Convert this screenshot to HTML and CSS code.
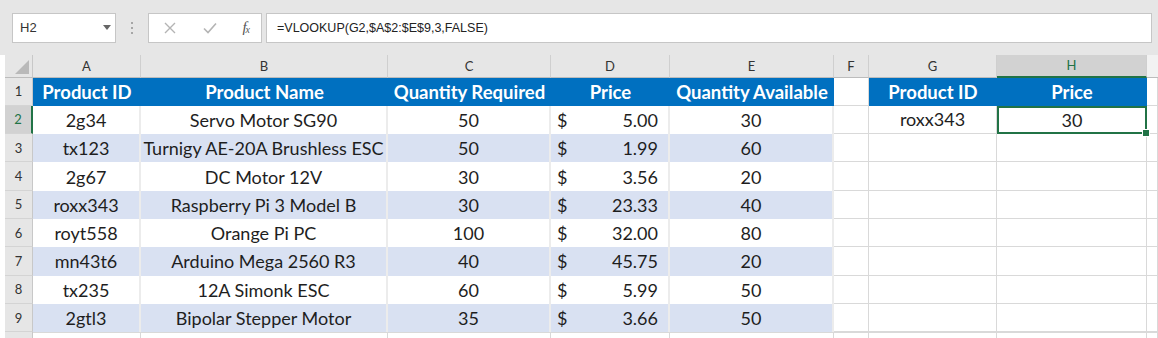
FILE: index.html
```html
<!DOCTYPE html>
<html lang="en">
<head>
  <meta charset="UTF-8">
  <meta name="viewport" content="width=device-width, initial-scale=1.0">
  <title>VLOOKUP Example</title>
  <link rel="stylesheet" href="styles.css">
</head>
<body>
  <div class="toolbar">
    <div class="name-box">
      <span>H2</span>
      <svg class="caret" width="8" height="5" viewBox="0 0 8 5"><path d="M0 0h8L4 5z" fill="#666"/></svg>
    </div>
    <div class="grip"><span></span><span></span><span></span></div>
    <div class="fx-box">
      <svg width="14" height="14" viewBox="0 0 14 14"><path d="M2 2l10 10M12 2L2 12" stroke="#b4b4b4" stroke-width="1.4" fill="none"/></svg>
      <svg width="16" height="14" viewBox="0 0 16 14"><path d="M2 7.5l4 4L14 2.5" stroke="#b4b4b4" stroke-width="1.6" fill="none"/></svg>
      <span class="fx"><i>f</i><sub>x</sub></span>
    </div>
    <div class="formula">=VLOOKUP(G2,$A$2:$E$9,3,FALSE)</div>
  </div>

  <div class="sheet">
    <!-- column letters -->
    <div class="row heads">
      <div class="corner"><span></span></div>
      <div class="ch">A</div>
      <div class="ch">B</div>
      <div class="ch">C</div>
      <div class="ch">D</div>
      <div class="ch">E</div>
      <div class="ch">F</div>
      <div class="ch">G</div>
      <div class="ch active">H</div>
      <div class="ch last"></div>
    </div>

    <div class="row">
      <div class="rh">1</div>
      <div class="c hd">Product ID</div>
      <div class="c hd">Product Name</div>
      <div class="c hd">Quantity Required</div>
      <div class="c hd">Price</div>
      <div class="c hd">Quantity Available</div>
      <div class="c plain"></div>
      <div class="c hd">Product ID</div>
      <div class="c hd">Price</div>
      <div class="c plain"></div>
    </div>

    <div class="row">
      <div class="rh active">2</div>
      <div class="c">2g34</div>
      <div class="c">Servo Motor SG90</div>
      <div class="c">50</div>
      <div class="c money"><span>$</span><span>5.00</span></div>
      <div class="c">30</div>
      <div class="c plain"></div>
      <div class="c plain">roxx343</div>
      <div class="c plain selected">30<span class="handle"></span></div>
      <div class="c plain"></div>
    </div>

    <div class="row band">
      <div class="rh">3</div>
      <div class="c">tx123</div>
      <div class="c">Turnigy AE-20A Brushless ESC</div>
      <div class="c">50</div>
      <div class="c money"><span>$</span><span>1.99</span></div>
      <div class="c">60</div>
      <div class="c plain"></div>
      <div class="c plain"></div>
      <div class="c plain"></div>
      <div class="c plain"></div>
    </div>

    <div class="row">
      <div class="rh">4</div>
      <div class="c">2g67</div>
      <div class="c">DC Motor 12V</div>
      <div class="c">30</div>
      <div class="c money"><span>$</span><span>3.56</span></div>
      <div class="c">20</div>
      <div class="c plain"></div>
      <div class="c plain"></div>
      <div class="c plain"></div>
      <div class="c plain"></div>
    </div>

    <div class="row band">
      <div class="rh">5</div>
      <div class="c">roxx343</div>
      <div class="c">Raspberry Pi 3 Model B</div>
      <div class="c">30</div>
      <div class="c money"><span>$</span><span>23.33</span></div>
      <div class="c">40</div>
      <div class="c plain"></div>
      <div class="c plain"></div>
      <div class="c plain"></div>
      <div class="c plain"></div>
    </div>

    <div class="row">
      <div class="rh">6</div>
      <div class="c">royt558</div>
      <div class="c">Orange Pi PC</div>
      <div class="c">100</div>
      <div class="c money"><span>$</span><span>32.00</span></div>
      <div class="c">80</div>
      <div class="c plain"></div>
      <div class="c plain"></div>
      <div class="c plain"></div>
      <div class="c plain"></div>
    </div>

    <div class="row band">
      <div class="rh">7</div>
      <div class="c">mn43t6</div>
      <div class="c">Arduino Mega 2560 R3</div>
      <div class="c">40</div>
      <div class="c money"><span>$</span><span>45.75</span></div>
      <div class="c">20</div>
      <div class="c plain"></div>
      <div class="c plain"></div>
      <div class="c plain"></div>
      <div class="c plain"></div>
    </div>

    <div class="row">
      <div class="rh">8</div>
      <div class="c">tx235</div>
      <div class="c">12A Simonk ESC</div>
      <div class="c">60</div>
      <div class="c money"><span>$</span><span>5.99</span></div>
      <div class="c">50</div>
      <div class="c plain"></div>
      <div class="c plain"></div>
      <div class="c plain"></div>
      <div class="c plain"></div>
    </div>

    <div class="row band">
      <div class="rh">9</div>
      <div class="c">2gtl3</div>
      <div class="c">Bipolar Stepper Motor</div>
      <div class="c">35</div>
      <div class="c money"><span>$</span><span>3.66</span></div>
      <div class="c">50</div>
      <div class="c plain"></div>
      <div class="c plain"></div>
      <div class="c plain"></div>
      <div class="c plain"></div>
    </div>

    <!-- next row, only its top edge is in view -->
    <div class="row empty">
      <div class="rh"></div>
      <div class="c plain"></div>
      <div class="c plain"></div>
      <div class="c plain"></div>
      <div class="c plain"></div>
      <div class="c plain"></div>
      <div class="c plain"></div>
      <div class="c plain"></div>
      <div class="c plain"></div>
      <div class="c plain"></div>
    </div>
  </div>
</body>
</html>
```

FILE: styles.css
```css
body {
  margin: 0;
  height: 338px;
  overflow: hidden;
  background-color: #fff;
  font-family: 'Lato', 'Liberation Sans', sans-serif;
  color: #1e1e1e;
}

/* formula bar */
.toolbar {
  display: flex;
  align-items: center;
  height: 55px;
  padding: 0 6px 0 12px;
  box-sizing: border-box;
  background-color: #e6e6e6;
}

.name-box {
  display: flex;
  align-items: center;
  justify-content: space-between;
  width: 104px;
  height: 30px;
  padding: 0 4px 0 7px;
  box-sizing: border-box;
  background-color: #fff;
  border: 1px solid #c6c6c6;
  font-family: 'Liberation Sans', sans-serif;
  font-size: 13px;
  color: #333;
}

.grip {
  display: flex;
  flex-direction: column;
  gap: 3px;
  width: 32px;
  align-items: center;
}

.grip span {
  width: 2px;
  height: 2px;
  background-color: #a6a6a6;
}

.fx-box {
  display: flex;
  align-items: center;
  justify-content: space-between;
  width: 114px;
  height: 30px;
  padding: 0 12px 0 14px;
  box-sizing: border-box;
  background-color: #fff;
  border: 1px solid #c6c6c6;
}

.fx {
  font-family: 'Liberation Serif', serif;
  font-size: 15px;
  color: #555;
  letter-spacing: -1px;
}

.fx sub {
  font-size: 10px;
  font-style: italic;
  vertical-align: -1px;
}

.formula {
  flex: 1;
  height: 30px;
  margin-left: 4px;
  padding-left: 10px;
  box-sizing: border-box;
  line-height: 28px;
  background-color: #fff;
  border: 1px solid #c6c6c6;
  font-family: 'Liberation Sans', sans-serif;
  font-size: 12.5px;
  color: #222;
}

/* grid */
.sheet {
  margin-left: 5px;
}

.row {
  display: grid;
  grid-template-columns: 28px 108px 247px 163px 119px 164px 35px 128px 150px 11px;
  height: 28.3px;
}

.row.heads {
  height: 22.5px;
  background-color: #e6e6e6;
}

.corner {
  position: relative;
  border-right: 1px solid #c8c8c8;
  border-bottom: 1px solid #bcbcbc;
}

.corner span {
  position: absolute;
  right: 3px;
  bottom: 3px;
  width: 0;
  height: 0;
  border-left: 14px solid transparent;
  border-bottom: 14px solid #b9b9b9;
}

.ch {
  display: flex;
  align-items: center;
  justify-content: center;
  border-right: 1px solid #cfcfcf;
  border-bottom: 1px solid #bcbcbc;
  font-size: 13px;
  color: #333;
}

.ch.active {
  background-color: #d2d2d2;
  color: #217346;
  border-bottom: 2px solid #217346;
}

.ch.last {
  background-color: #f2f2f2;
  border-right: none;
}

.rh {
  display: flex;
  align-items: center;
  justify-content: center;
  background-color: #e6e6e6;
  border-right: 1px solid #c8c8c8;
  border-bottom: 1px solid #d4d4d4;
  font-size: 13px;
  color: #333;
}

.rh.active {
  background-color: #d2d2d2;
  color: #217346;
  border-right: 2px solid #217346;
}

.c {
  display: flex;
  align-items: center;
  justify-content: center;
  box-sizing: border-box;
  border-right: 2px solid #ececec;
  font-size: 18px;
  white-space: nowrap;
  overflow: hidden;
}

.band .c {
  background-color: #d9e1f2;
}

.c.hd {
  background-color: #0070c0;
  border-right: none;
  color: #fff;
  font-weight: bold;
  font-size: 18.5px;
}

.c.money {
  justify-content: space-between;
  padding: 0 10px 0 6px;
}

.c.plain,
.band .c.plain {
  background-color: #fff;
  border-right: 1px solid #d9d9d9;
  border-bottom: 1px solid #d9d9d9;
}

.empty .c.plain {
  border-top: 1px solid #d9d9d9;
}

.c.selected {
  position: relative;
  overflow: visible;
  border: 2px solid #217346;
}

.handle {
  position: absolute;
  right: -5px;
  bottom: -5px;
  width: 6px;
  height: 6px;
  background-color: #217346;
  border: 1px solid #fff;
}
```
